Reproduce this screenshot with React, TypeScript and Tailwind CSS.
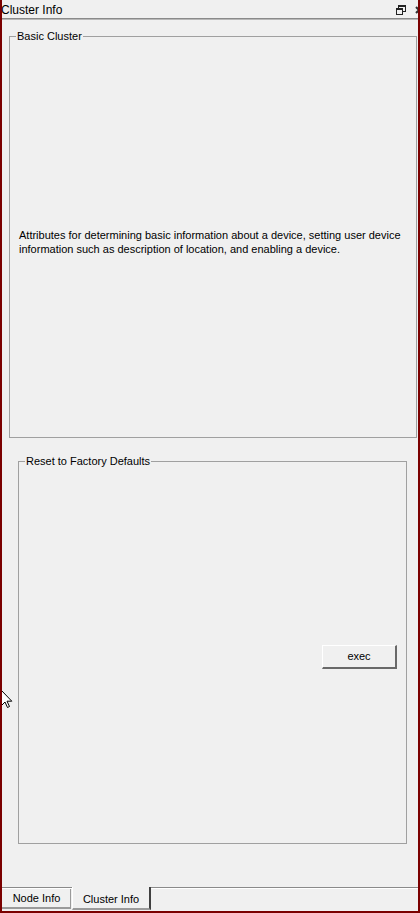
import React from "react";

const FONT = { fontFamily: '"Liberation Sans", Arial, sans-serif' };

function RestoreIcon() {
  return (
    <svg width="10" height="10" viewBox="0 0 10 10" className="block">
      <rect x="2.5" y="0.5" width="7" height="6" fill="none" stroke="#222" />
      <rect x="2.5" y="0.5" width="7" height="1.5" fill="#222" />
      <rect x="0.5" y="3.5" width="6" height="6" fill="#f0f0f0" stroke="#222" />
      <rect x="0.5" y="3.5" width="6" height="1.5" fill="#222" />
    </svg>
  );
}

// close glyph, half hidden behind the window's right edge
function CloseIcon() {
  return (
    <svg width="8" height="8" viewBox="0 0 8 8" className="block">
      <path d="M1 1 L7 7 M7 1 L1 7" stroke="#333" strokeWidth="2" />
    </svg>
  );
}

function Cursor() {
  return (
    <svg width="12" height="19" viewBox="0 0 12 19" className="block">
      <path
        d="M0.5 0.5 L0.5 15.5 L4 12 L6.5 17.5 L8.5 16.5 L6 11.2 L10.8 11.2 Z"
        fill="#fff"
        stroke="#000"
        strokeWidth="1"
      />
    </svg>
  );
}

function GroupBox({
  label,
  className,
  children,
}: {
  label: string;
  className: string;
  children?: React.ReactNode;
}) {
  return (
    <div className={`flex flex-col border border-[#a0a0a0] ${className}`}>
      <span className="self-start -mt-[7px] ml-[6px] px-px bg-[#f0f0f0] text-[11px] leading-[13px] text-black">
        {label}
      </span>
      {children}
    </div>
  );
}

export default function App() {
  return (
    <div
      className="relative w-[420px] h-[913px] bg-[#f0f0f0] border-l-2 border-r-2 border-b-2 border-[#7b0000] flex flex-col overflow-hidden text-black"
      style={FONT}
    >
      {/* title bar */}
      <div className="h-[18px] flex items-center justify-between -ml-px">
        <span className="text-[12px] leading-[16px] pt-px">Cluster Info</span>
        <div className="flex items-center gap-[9px] mr-[-5px] pt-px">
          <RestoreIcon />
          <CloseIcon />
        </div>
      </div>
      <div className="h-[2px] bg-[#8a8a8a] border-b border-[#b8b8b8]" />

      {/* Basic Cluster */}
      <GroupBox label="Basic Cluster" className="ml-[7px] mr-px mt-[16px] h-[402px]">
        <div className="flex-1 flex items-center pl-[9px] pr-[6px] pt-[4px]">
          <p className="text-[11px] leading-[14px] text-black">
            Attributes for determining basic information about a device, setting user device
            information such as description of location, and enabling a device.
          </p>
        </div>
      </GroupBox>

      {/* Reset to Factory Defaults */}
      <GroupBox
        label="Reset to Factory Defaults"
        className="ml-[16px] mr-[11px] mt-[23px] h-[383px]"
      >
        <div className="flex-1 flex items-center justify-end pr-[9px] pt-[2px]">
          <button
            type="button"
            className="w-[75px] h-[24px] bg-[#f0f0f0] border-t border-l border-t-white border-l-white border-r-2 border-b-2 border-r-[#696969] border-b-[#696969] text-[11px] leading-none text-black"
          >
            exec
          </button>
        </div>
      </GroupBox>

      <div className="flex-1" />

      {/* tab strip */}
      <div className="h-[24px] flex flex-col">
        <div className="h-[2px] bg-[#8a8a8a] border-b border-white" />
        <div className="flex items-start h-[22px]">
          <div className="w-[69px] h-[20px] border-b-2 border-b-[#9a9a9a] border-r border-r-[#9a9a9a] flex items-center justify-center text-[11px] leading-none pl-px">
            Node Info
          </div>
          <div className="-mt-[2px] ml-px w-[79px] h-[23px] bg-[#f0f0f0] border-l border-l-white border-r-2 border-r-[#404040] border-b-2 border-b-[#9a9a9a] flex items-center justify-center text-[11px] leading-none pt-[3px]">
            Cluster Info
          </div>
        </div>
      </div>

      {/* mouse pointer overlay */}
      <div className="absolute left-[-1px] top-[690px]">
        <Cursor />
      </div>
    </div>
  );
}
